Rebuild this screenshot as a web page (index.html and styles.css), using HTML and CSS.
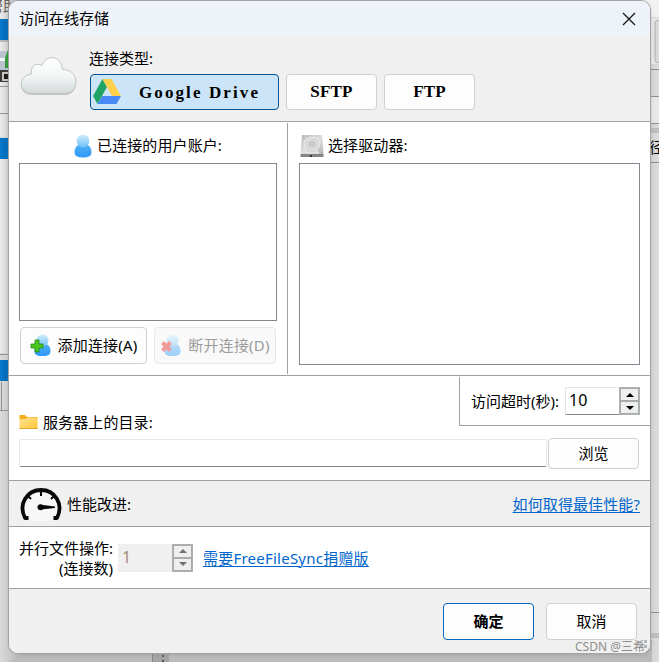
FILE: index.html
```html
<!DOCTYPE html>
<html lang="zh-CN">
<head>
<meta charset="utf-8">
<title>访问在线存储</title>
<link rel="stylesheet" href="styles.css">
</head>
<body>
<svg class="desktop" width="659" height="662" viewBox="0 0 659 662" aria-hidden="true">
  <defs>
    <linearGradient id="edgeL" x1="0" x2="1"><stop offset="0" stop-color="#d9d9d9"/><stop offset="1" stop-color="#bababa"/></linearGradient>
    <linearGradient id="edgeLight" x1="0" x2="1"><stop offset="0" stop-color="#ececec"/><stop offset="1" stop-color="#cecece"/></linearGradient>
    <linearGradient id="edgeR" x1="0" x2="1"><stop offset="0" stop-color="#c8c8c8"/><stop offset="1" stop-color="#dcdcdc"/></linearGradient>
    <linearGradient id="edgeB" x1="0" x2="0" y1="0" y2="1"><stop offset="0" stop-color="#b0b0b0"/><stop offset="1" stop-color="#bcbcbc"/></linearGradient>
    <linearGradient id="bar" x1="0" x2="1"><stop offset="0" stop-color="#0878ce"/><stop offset="1" stop-color="#0066b4"/></linearGradient>
  </defs>
  <path d="M0 0h25v662H0z" fill="url(#edgeL)"/>
  <path d="M0 0h9v19H0zM0 41h9v96H0zM0 159h9v194H0z" fill="url(#edgeLight)"/>
  <path d="M0 19h9v21H0zM0 138h9v21H0zM0 360h9v21H0z" fill="url(#bar)"/>
  <path d="M0 41h9M0 86.500h9M0 113.500h9M0 354.500h9M0 410.500h9M1.500 382v28" stroke="#929292" fill="none"/>
  <path d="M0 51h9v20H0z" fill="#b9c4cc"/><path d="M0 58h9v3H0z" fill="#eef3f6"/>
  <path d="M5 58l4-11v21H5z" fill="#2d9b35"/>
  <path d="M0 70h9v12H0z" fill="#3c3a38"/><path d="M2 72h7v9H2z" fill="#c9c4bd"/><path d="M4 74h4v5H4z" fill="#171717"/>
  <path d="M640 0h19v662h-19z" fill="url(#edgeR)"/>
  <path d="M640 0h19v17h-19z" fill="#f1f1f1"/>
  <path d="M650 18h9v46h-9zM650 97h9v27h-9z" fill="#e7e7e7"/>
  <path d="M660 20.500h-3q-2 0-2 3v36q0 3 2 3h3" fill="#d9d9d9" stroke="#ababab"/>
  <path d="M650 69.500h9M650 96.500h9M650 123.500h9M650 162.500h9M650 612.500h9" stroke="#8e8e8e"/>
  <path d="M650 128h9v5h-9zM650 633h9v5h-9z" fill="#bdbdbd"/>
  <path d="M0 640h9q2 14 12 14h618q12-1 12-14h1v22H0z" fill="url(#edgeB)"/>
  <path d="M0 640h9q2 12 12 14l-12 8H0z" fill="url(#edgeL)"/>
  <path d="M152.500 654v8" stroke="#848484"/><path d="M153 654h16v8h-16z" fill="#a4a4a4"/><path d="M162 655h2v2h-2zM162 660h2v2h-2z" fill="#555"/>
</svg>
<span class="behind behind-left">帮助</span>
<span class="behind behind-right">径</span>

<main class="dialog">
  <header class="titlebar">
    <span class="title">访问在线存储</span>
    <svg width="14" height="14" viewBox="0 0 14 14"><path d="M1 1l12 12M13 1L1 13" stroke="#151515" stroke-width="1.300"/></svg>
  </header>

  <section class="types">
    <svg class="cloud" width="60" height="44" viewBox="0 0 60 44">
      <defs><linearGradient id="cloudFill" x1="0" x2="0" y1="0" y2="1"><stop offset="0" stop-color="#fff"/><stop offset=".5" stop-color="#f4f6f6"/><stop offset="1" stop-color="#d3dada"/></linearGradient></defs>
      <path d="M14 41C-2 41 -1 23 12.500 21.500C11 13 18 9.500 23 13C28 1 42 3 43.500 17C61 17 61 40.500 46 41z" fill="#999" opacity=".5"/>
      <path d="M14 39.500C-2 39.500 -1 21.500 12.500 20C11 12 18 8 23 11.500C28 -.5 42 1.500 43.500 15.500C61 15.500 61 39 46 39.500z" fill="url(#cloudFill)" stroke="#bcc4c4" stroke-width="1"/>
    </svg>
    <div class="type-body">
      <span class="caption">连接类型:</span>
      <div class="type-row">
        <button class="btn mono google">
          <svg width="28" height="26" viewBox="0 0 28 26"><path d="M9.500 0L0 17l4.500 8L14 8z" fill="#1fa463"/><path d="M9.500 0h9L28 17h-9z" fill="#ffd04b"/><path d="M9.300 17H28l-4.500 8h-19z" fill="#4688f4"/></svg>
          <span>Google Drive</span>
        </button>
        <button class="btn mono">SFTP</button>
        <button class="btn mono">FTP</button>
      </div>
    </div>
  </section>

  <section class="panes">
    <div class="pane accounts">
      <div class="pane-head">
        <svg width="18" height="24" viewBox="0 0 18 24">
          <defs>
            <linearGradient id="head" x1="0" x2="0" y1="0" y2="1"><stop offset="0" stop-color="#d2effd"/><stop offset="1" stop-color="#6fc1f7"/></linearGradient>
            <linearGradient id="torso" x1="0" x2="0" y1="0" y2="1"><stop offset="0" stop-color="#4fb0f5"/><stop offset="1" stop-color="#2e98fa"/></linearGradient>
          </defs>
          <g id="person"><path d="M4.500 11Q.5 12.500 .5 18.500q0 5 8.500 5t8.500-5q0-6-4-7.500z" fill="url(#torso)"/><circle cx="9" cy="6.900" r="6.400" fill="url(#head)"/></g>
        </svg>
        <span>已连接的用户账户:</span>
      </div>
      <div class="list account-list"></div>
      <div class="account-actions">
        <button class="btn add">
          <svg width="21" height="24" viewBox="0 0 21 24"><use href="#person" transform="translate(4 1) scale(.94)"/><path d="M5 7h4v4h4v4H9v4H5v-4H1v-4h4z" fill="#4cc51e" stroke="#218a12" stroke-width=".8"/></svg>
          <span>添加连接(A)</span>
        </button>
        <button class="btn remove" disabled>
          <svg width="21" height="24" viewBox="0 0 21 24"><use href="#person" transform="translate(4 1) scale(.94)"/><path d="M2.500 9.500l8 8M10.500 9.500l-8 8" stroke="#e61919" stroke-width="4"/></svg>
          <span>断开连接(D)</span>
        </button>
      </div>
    </div>
    <div class="pane drives">
      <div class="pane-head">
        <svg width="24" height="24" viewBox="0 0 24 24">
          <defs><linearGradient id="disk" x1="0" x2="1" y1="0" y2="1"><stop offset="0" stop-color="#b9b9b9"/><stop offset=".5" stop-color="#dedede"/><stop offset="1" stop-color="#b5b5b5"/></linearGradient></defs>
          <path d="M2 1h20l1.500 19H.5z" fill="url(#disk)"/><path d="M.5 20h23v3H.5z" fill="#858585"/><path d="M10 21h2v2h-2z" fill="#333"/>
          <path d="M4 10C3 2 20 1 20 9q0 4-4 7l3 3H6q-1-4 0-5-2-1-2-4z" fill="#d9d9d9" stroke="#efefef"/><circle cx="12" cy="10" r="2.500" fill="#d0d0d0" stroke="#b5b5b5" stroke-width=".7"/>
        </svg>
        <span>选择驱动器:</span>
      </div>
      <div class="list drive-list"></div>
    </div>
  </section>

  <section class="directory">
    <div class="dir-top">
      <div class="dir-label">
        <svg width="19" height="14" viewBox="0 0 19 14"><defs><linearGradient id="folder" x1="0" x2="1" y1="0" y2="1"><stop offset="0" stop-color="#ffe293"/><stop offset="1" stop-color="#ffc738"/></linearGradient></defs><path d="M.5 0H6l2 2h10.500v3H.5z" fill="#f4ae18"/><path d="M.5 4H7l1.500-1.500h10V14H.5z" fill="url(#folder)"/><path d="M.5 13.500h18" stroke="#e2a52b"/></svg>
        <span>服务器上的目录:</span>
      </div>
      <div class="timeout">
        <span>访问超时(秒):</span>
        <div class="spin"><span class="spin-value">10</span><span class="arrows"><i><svg width="8" height="4"><path d="M0 4L4 0l4 4z"/></svg></i><i><svg width="8" height="4"><path d="M0 0l4 4 4-4z"/></svg></i></span></div>
      </div>
    </div>
    <div class="path-row"><div class="path-input"></div><button class="btn browse">浏览</button></div>
  </section>

  <section class="performance">
    <svg width="42" height="34" viewBox="0 0 42 34">
      <circle cx="21" cy="20" r="17" fill="#f7f7f7"/>
      <path d="M8.500 31H5C-2 17 7 3 21 3s23 14 16 28h-3.500" fill="none" stroke="#080808" stroke-width="3.800" stroke-linejoin="round"/>
      <path d="M21 4v5M8.500 9.500l2.500 2.500M33.500 9.500L31 12" stroke="#080808" stroke-width="2"/>
      <path d="M21 17.800l14 1.700v1.400l-14 1.700z" fill="#080808"/><circle cx="20.500" cy="20.200" r="3" fill="#080808"/>
    </svg>
    <span>性能改进:</span>
    <a class="link" href="#">如何取得最佳性能?</a>
  </section>

  <section class="parallel">
    <div class="parallel-label">并行文件操作:<br>(连接数)</div>
    <div class="spin off"><span class="spin-value">1</span><span class="arrows"><i><svg width="8" height="4"><path d="M0 4L4 0l4 4z"/></svg></i><i><svg width="8" height="4"><path d="M0 0l4 4 4-4z"/></svg></i></span></div>
    <a class="link donate" href="#">需要FreeFileSync捐赠版</a>
  </section>

  <footer class="footer">
    <button class="btn ok">确定</button>
    <button class="btn">取消</button>
  </footer>
</main>
<svg class="grip" width="8" height="12" viewBox="0 0 8 12"><path d="M4 0h3v3H4zM4 5h3v3H4zM0 5h3v3H0z" fill="#b5b5b5"/></svg>
<span class="watermark">CSDN @三希</span>
</body>
</html>
```

FILE: styles.css
```css
* { box-sizing: border-box; }
body {
  margin: 0;
  width: 659px;
  height: 662px;
  overflow: hidden;
  position: relative;
  background: #b8b8b8;
  color: #000;
  font: 15px/20px "Noto Sans", "Noto Sans CJK SC", sans-serif;
}
svg { display: block; flex: none; }
.desktop { position: absolute; left: 0; top: 0; }
.behind { position: absolute; overflow: hidden; white-space: nowrap; }
.behind-left { left: 0; top: -4px; width: 12px; text-indent: -12px; color: #6b6259; }
.behind-right { left: 650px; top: 137px; width: 9px; text-indent: -1px; }

.dialog {
  position: relative;
  display: flex;
  flex-direction: column;
  width: 643px;
  height: 654px;
  margin-left: 8px;
  overflow: hidden;
  border: 1px solid #a3a3a3;
  border-radius: 10px;
  background: #fff;
  white-space: nowrap;
  box-shadow: 0 1px 3px #8885;
}
.titlebar {
  display: flex;
  align-items: center;
  justify-content: space-between;
  height: 36px;
  padding: 0 14px 0 10px;
  background: #eef3f9;
}
.title { padding-bottom: 2px; }
.btn {
  display: flex;
  align-items: center;
  justify-content: center;
  width: 91px;
  height: 36px;
  padding: 0 0 1px;
  border: 1px solid #d0d0d0;
  border-radius: 4px;
  background: #fdfdfd;
  color: #000;
  font: inherit;
}
.types {
  display: flex;
  height: 85px;
  padding-left: 10px;
  border-bottom: 1px solid #a0a0a0;
  background: #f0f0f0;
}
.cloud { margin-top: 17px; }
.type-body { padding: 11px 0 0 10px; }
.caption { display: block; height: 26px; }
.type-row { display: flex; gap: 7px; padding-left: 1px; }
.mono { font: bold 17px/20px "Liberation Serif", serif; letter-spacing: .2px; }
.mono.google {
  justify-content: flex-start;
  width: 189px;
  padding-left: 2px;
  border-color: #005499;
  background: #cce4f7;
  letter-spacing: 2.100px;
}
.google span { margin: 2px 0 0 18px; }

.panes { display: flex; height: 254px; border-bottom: 1px solid #a0a0a0; }
.pane-head { display: flex; align-items: center; height: 24px; gap: 5px; }
.pane-head span { padding-bottom: 2px; letter-spacing: .1px; }
.list { border: 1px solid #828790; }
.accounts {
  width: 279px;
  height: 251px;
  margin-top: 1px;
  padding: 11px 10px 0;
  border-right: 1px solid #a0a0a0;
}
.accounts .pane-head { justify-content: center; }
.account-list { height: 158px; margin-top: 5px; }
.account-actions { display: flex; gap: 7px; padding: 6px 0 0 1px; }
.account-actions .btn { height: 37px; gap: 7px; letter-spacing: .2px; }
.account-actions .add { width: 127px; }
.account-actions .remove { width: 122px; border-color: #e8e8e8; background: #f9f9f9; color: #9c9c9c; }
.remove svg { opacity: .42; }
.drives { width: 362px; padding: 12px 10px 0 11px; }
.drives svg { margin-left: 1px; }
.drives .pane-head { gap: 4px; }
.drive-list { height: 202px; margin-top: 5px; }

.directory { height: 105px; border-bottom: 1px solid #a0a0a0; }
.dir-top { display: flex; justify-content: space-between; height: 62px; }
.dir-label { display: flex; align-items: center; align-self: flex-end; gap: 5px; height: 20px; padding-left: 10px; margin-bottom: 6px; letter-spacing: .1px; }
.timeout {
  display: flex;
  align-items: center;
  justify-content: space-between;
  width: 191px;
  height: 49px;
  margin-top: 1px;
  padding: 0 10px 0 11px;
  border-left: 1px solid #a0a0a0;
  border-bottom: 1px solid #a0a0a0;
}
.spin {
  display: flex;
  justify-content: space-between;
  width: 75px;
  height: 28px;
  border: 1px solid #e5e5e5;
  border-bottom-color: #868686;
  border-right: 0;
  background: #fff;
}
.spin-value { padding: 2px 0 0 3px; font-size: 16px; }
.arrows {
  display: grid;
  grid-template-rows: 13px 13px;
  gap: 0;
  width: 21px;
  height: 28px;
  margin-top: -1px;
  border: 1px solid #adb2b5;
  background: #f0f0f0;
}
.arrows i { display: flex; align-items: center; justify-content: center; border: 1px solid #a8abad; background: #efefef; }
.path-row { display: flex; gap: 1px; padding-left: 10px; }
.path-input { width: 528px; height: 28px; margin-top: 1px; border: 1px solid #e7e7e7; border-bottom-color: #868686; border-radius: 2px; }
.path-row .browse { height: 31px; }

.performance {
  display: flex;
  align-items: center;
  height: 46px;
  padding: 0 10px 0 11px;
  gap: 5px;
  border-bottom: 1px solid #a0a0a0;
  background: #f0f0f0;
}
.link { color: #0066cc; text-underline-offset: 2px; text-decoration-thickness: 1px; }
.performance .link { margin-left: auto; letter-spacing: .1px; }
.parallel { display: flex; align-items: center; height: 62px; padding-left: 10px; border-bottom: 1px solid #a0a0a0; }
.parallel-label { width: 94px; text-align: right; }
.parallel .spin { margin: 0 10px 0 5px; }
.parallel .off { border-color: #eee; background: #f0f0f0; color: #a38e7c; }
.donate { letter-spacing: .23px; }
.off .arrows { fill: #707070; }
.footer { display: flex; flex: 1; gap: 12px; padding: 14px 13px 0 0; justify-content: flex-end; background: #f0f0f0; }
.footer .btn { height: 37px; padding-bottom: 2px; }
.footer .ok { border-color: #0067c0; font-weight: bold; }
.watermark { position: absolute; left: 575px; top: 638px; color: #8d8d8d; font-size: 12px; line-height: 17px; white-space: nowrap; }
.grip { position: absolute; left: 640px; top: 640px; }
```
